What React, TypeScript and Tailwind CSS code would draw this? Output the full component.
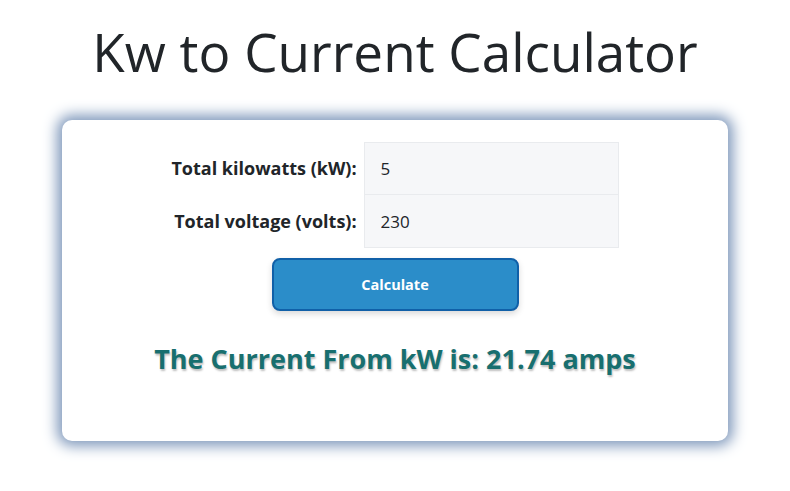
import { useState } from 'react'

export default function App() {
  const [kw, setKw] = useState('5')
  const [volts, setVolts] = useState('230')
  const [result, setResult] = useState('21.74')

  // simple single phase: I = P * 1000 / V
  const calculate = () => {
    const p = Number(kw)
    const v = Number(volts)
    if (!v) return
    setResult(((p * 1000) / v).toFixed(2))
  }

  return (
    <div className="min-h-[491px] w-[790px] bg-white font-['Open_Sans',sans-serif] text-[#212529]">
      <h1 className="pt-[16px] text-center text-[53px] leading-[72px] font-normal">
        Kw to Current Calculator
      </h1>

      <div className="mx-[62px] mt-[32px] h-[321px] rounded-[10px] bg-white pt-[22px] shadow-[0_0_14px_5px_#7f98bb]">
        <div className="grid grid-cols-[auto_255px] justify-center gap-x-[7px]">
          <label className="flex items-center justify-end text-[18px] font-bold">
            Total kilowatts (kW):
          </label>
          <input
            className="h-[53px] border border-[#e9ebee] bg-[#f6f7f9] px-4 text-[17px] outline-none"
            type="text"
            value={kw}
            onChange={(e) => setKw(e.target.value)}
          />
          <label className="flex items-center justify-end text-[18px] font-bold">
            Total voltage (volts):
          </label>
          <input
            className="-mt-px h-[54px] border border-[#e9ebee] bg-[#f6f7f9] px-4 text-[17px] outline-none"
            type="text"
            value={volts}
            onChange={(e) => setVolts(e.target.value)}
          />
        </div>

        <div className="mt-[10px] flex justify-center">
          <button
            onClick={calculate}
            className="h-[53px] w-[247px] rounded-[8px] border-2 border-[#1060a8] bg-[#2b8dc9] text-[14.5px] font-bold text-white shadow-[0_3px_6px_rgba(0,0,0,0.15)]"
          >
            Calculate
          </button>
        </div>

        <p className="mt-[28px] text-center text-[27px] font-bold text-[#186f6f] [text-shadow:1px_2px_2px_rgba(0,0,0,0.25)]">
          The Current From kW is: {result} amps
        </p>
      </div>
    </div>
  )
}
